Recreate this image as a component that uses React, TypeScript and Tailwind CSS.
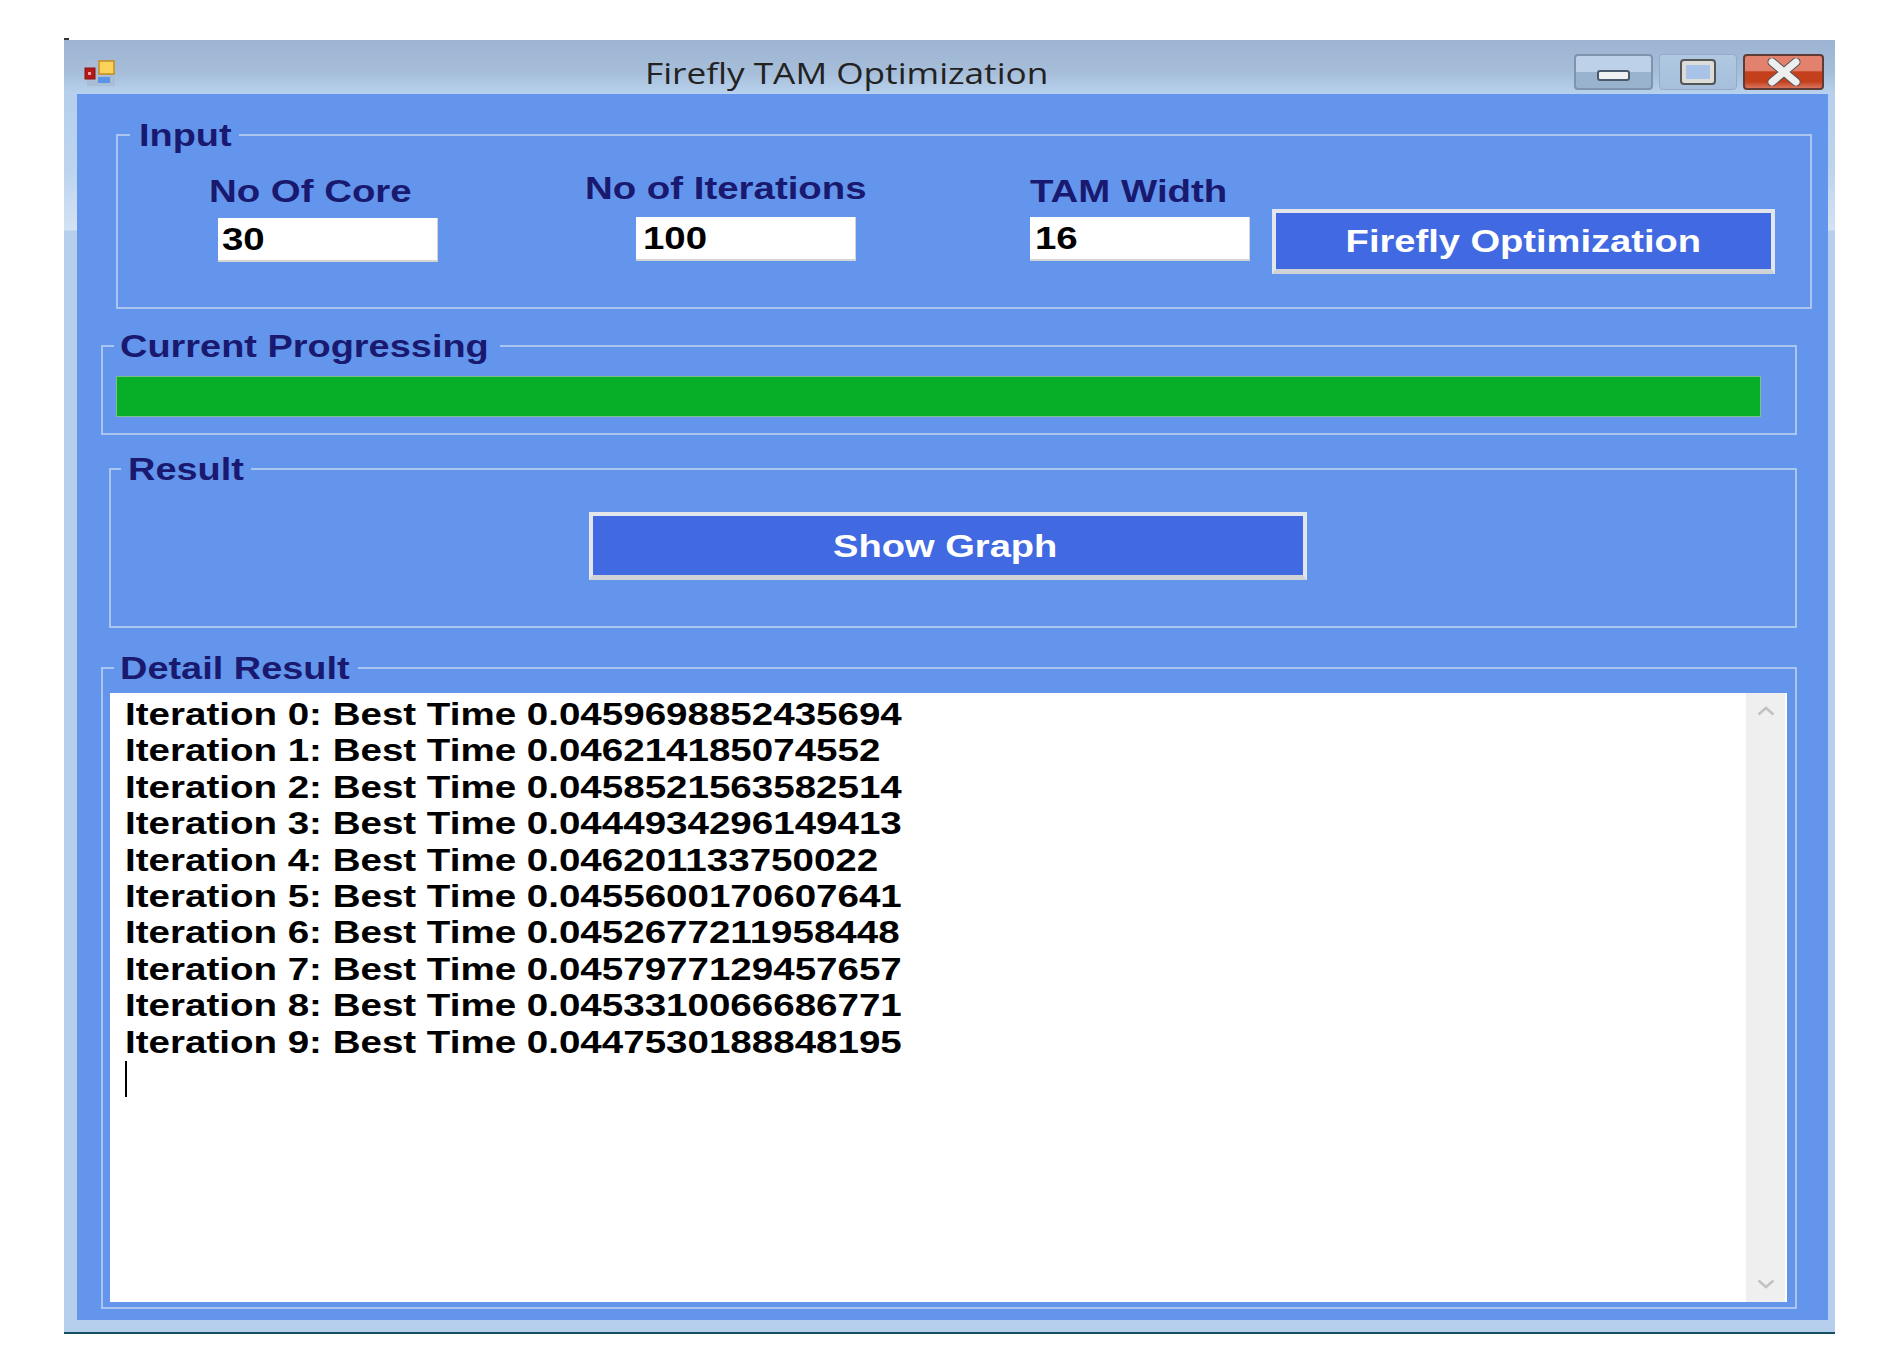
import React from "react";

const ROWS = [
  "Iteration 0: Best Time 0.0459698852435694",
  "Iteration 1: Best Time 0.046214185074552",
  "Iteration 2: Best Time 0.0458521563582514",
  "Iteration 3: Best Time 0.0444934296149413",
  "Iteration 4: Best Time 0.046201133750022",
  "Iteration 5: Best Time 0.0455600170607641",
  "Iteration 6: Best Time 0.0452677211958448",
  "Iteration 7: Best Time 0.0457977129457657",
  "Iteration 8: Best Time 0.0453310066686771",
  "Iteration 9: Best Time 0.0447530188848195",
];

function Wide({ children }: { children: React.ReactNode }) {
  return <span className="inline-block origin-left scale-x-[1.2] whitespace-nowrap">{children}</span>;
}

function Legend({ text, cls }: { text: string; cls: string }) {
  return (
    <div className={"absolute top-[-18px] h-[34px] bg-[#6495ed] text-[32px] leading-[34px] font-bold text-[#191970] " + cls}>
      <span className="inline-block origin-left scale-x-[1.185] whitespace-nowrap">{text}</span>
    </div>
  );
}

function Field({ value, cls }: { value: string; cls: string }) {
  return (
    <div className={"w-[220px] h-[44px] bg-white border-b-2 border-r border-[#d4d4d4] text-[32px] leading-[42px] font-bold text-black " + cls}>
      <Wide>{value}</Wide>
    </div>
  );
}

function Label({ text, cls }: { text: string; cls?: string }) {
  return (
    <div className={"h-[34px] text-[32px] leading-[34px] font-bold text-[#191970] " + (cls ?? "")}>
      <Wide>{text}</Wide>
    </div>
  );
}

function Button({ text, cls }: { text: string; cls: string }) {
  return (
    <div className={"flex items-center justify-center bg-[#4169e1] border-[4px] border-[#e3e6ea] border-b-[5px] border-b-[#cfd2d6] text-white text-[32px] font-bold " + cls}>
      <span className="inline-block scale-x-[1.19] whitespace-nowrap">{text}</span>
    </div>
  );
}

export default function App() {
  return (
    <div className="w-[1903px] h-[1365px] bg-white overflow-hidden pt-[40px] pl-[64px] font-['Liberation_Sans',Arial,sans-serif]">
      <div className="relative w-[1771px] h-[1294px] flex flex-col bg-[linear-gradient(180deg,#b5cfec_54px,#bdd4ee_130px,#d3e2f3_190px,#b5cfec_191px,#b5cfec_100%)] border-b-2 border-b-[#14505f]">
        <div className="absolute left-0 top-[-2px] w-[5px] h-[2px] bg-[#333]" />
        {/* title bar */}
        <div className="h-[54px] flex items-center relative bg-[linear-gradient(180deg,#9cb4d2,#a6bed9_60%,#b8d1ec)]">
          <svg className="ml-[20px] mt-[12px] w-[32px] h-[30px]" viewBox="0 0 32 30">
            <rect x="3" y="3" width="28" height="25" fill="#aabdd4" />
            <rect x="1" y="10" width="10" height="11" fill="#b11818" stroke="#8e1010" />
            <rect x="4" y="14" width="3" height="3" fill="#f0a0a0" />
            <rect x="15" y="3" width="15" height="13" fill="#fbd35a" stroke="#c48f1a" strokeWidth="1.5" />
            <rect x="14" y="19" width="12" height="6" fill="#5b93e6" />
          </svg>
          <div className="ml-[529px] mt-[11px] text-[29px] leading-[36px] text-[#222] font-['Open_Sans',sans-serif] inline-block origin-left scale-x-[1.214] whitespace-nowrap">
            Firefly TAM Optimization
          </div>
          <div className="ml-auto mr-[11px] mt-[10px] flex gap-[6px]">
            <div className="w-[79px] h-[36px] rounded-[4px] border-2 border-[#7e93ac] bg-[linear-gradient(180deg,#bdd2e9_50%,#99b2cd_50%)] flex items-center justify-center">
              <div className="w-[33px] h-[11px] mt-[6px] rounded-[3px] bg-[#eef0f2] border-2 border-[#4a5a6c]" />
            </div>
            <div className="w-[78px] h-[36px] rounded-[4px] border border-[#93abc6] bg-[linear-gradient(180deg,#b0c8e2,#a6bfda)] flex items-center justify-center">
              <div className="w-[32px] h-[22px] rounded-[2px] bg-[#a9c3e8] border-[4px] border-[#dcdcd8] outline-2 outline-[#555]" />
            </div>
            <div className="w-[81px] h-[36px] rounded-[4px] border-2 border-[#5f3b38] bg-[linear-gradient(180deg,#e2816e_45%,#c4401d_50%,#c4401d_80%,#d9745c)] flex items-center justify-center">
              <svg className="w-[36px] h-[28px]" viewBox="0 0 36 28">
                <path d="M6 4 L30 24 M30 4 L6 24" stroke="#555" strokeWidth="9" strokeLinecap="round" />
                <path d="M6 4 L30 24 M30 4 L6 24" stroke="#eeeeee" strokeWidth="7" strokeLinecap="round" />
              </svg>
            </div>
          </div>
        </div>

        {/* client */}
        <div className="flex-1 ml-[13px] mr-[7px] mb-[12px] bg-[#6495ed] pt-[40px]">
          {/* Input */}
          <div className="relative ml-[39px] w-[1696px] h-[175px] border-2 border-[#aac6f0] flex items-start pl-[91px]">
            <Legend text="Input" cls="left-[12px] w-[109px] pl-[9px]" />
            <div className="mt-[38px] w-[228px]">
              <Label text="No Of Core" />
              <Field value="30" cls="mt-[10px] ml-[9px] pl-[4px]" />
            </div>
            <div className="ml-[148px] mt-[35px] w-[271px]">
              <Label text="No of Iterations" />
              <Field value="100" cls="mt-[12px] ml-[51px] pl-[7px]" />
            </div>
            <div className="ml-[174px] mt-[38px] w-[220px]">
              <Label text="TAM Width" />
              <Field value="16" cls="mt-[9px] pl-[5px]" />
            </div>
            <Button text="Firefly Optimization" cls="ml-[22px] mt-[73px] w-[503px] h-[65px]" />
          </div>

          {/* Current Progressing */}
          <div className="relative ml-[24px] mt-[36px] w-[1696px] h-[90px] border-2 border-[#aac6f0]">
            <Legend text="Current Progressing" cls="left-[11px] w-[386px] pl-[6px]" />
            <div className="ml-[13px] mt-[29px] w-[1645px] h-[41px] bg-[#07ae28] border border-[#7fbf8a]" />
          </div>

          {/* Result */}
          <div className="relative ml-[32px] mt-[33px] w-[1688px] h-[160px] border-2 border-[#aac6f0]">
            <Legend text="Result" cls="left-[10px] w-[130px] pl-[7px]" />
            <Button text="Show Graph" cls="ml-[478px] mt-[42px] w-[718px] h-[68px] pr-[5px]" />
          </div>

          {/* Detail Result */}
          <div className="relative ml-[24px] mt-[39px] w-[1696px] h-[642px] border-2 border-[#aac6f0]">
            <Legend text="Detail Result" cls="left-[11px] w-[244px] pl-[6px]" />
            <div className="relative ml-[7px] mt-[24px] w-[1677px] h-[609px] bg-white flex">
              <div className="flex-1 pl-[15px] pt-[3px] text-[32px] leading-[36.4px] font-bold text-black">
                {ROWS.map((r) => (
                  <div key={r} className="h-[36.4px]">
                    <span className="inline-block origin-left scale-x-[1.204] whitespace-nowrap">{r}</span>
                  </div>
                ))}
                <div className="w-[2px] h-[36px] bg-black mt-[1px]" />
              </div>
              <div className="w-[39px] bg-[#efefef] mr-[2px] flex flex-col items-center justify-between pt-[12px] pb-[12px]">
                <svg className="w-[18px] h-[11px]" viewBox="0 0 18 11">
                  <path d="M1.5 9.5 L9 3 L16.5 9.5" fill="none" stroke="#c2c2c2" strokeWidth="2.5" />
                </svg>
                <svg className="w-[18px] h-[11px]" viewBox="0 0 18 11">
                  <path d="M1.5 1.5 L9 8 L16.5 1.5" fill="none" stroke="#c2c2c2" strokeWidth="2.5" />
                </svg>
              </div>
            </div>
          </div>
        </div>
      </div>
    </div>
  );
}
